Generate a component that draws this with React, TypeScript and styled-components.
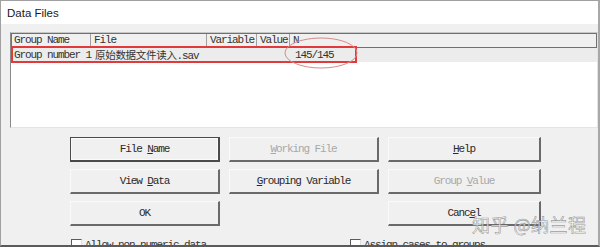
import styled, { createGlobalStyle } from 'styled-components'

const GlobalStyle = createGlobalStyle`
    body {
        margin: 0;
        background: #ffffff;
    }
    * {
        box-sizing: border-box;
    }
`;

const mono = `"Liberation Mono", "Noto Sans CJK SC", monospace`;

const Window = styled.div`
    position: relative;
    width: 600px;
    height: 247px;
    overflow: hidden;
    display: flex;
    flex-direction: column;
    background: #f0f0f0;
    border: 1px solid #a0a0a0;
    border-right: 2px solid #a8a8a8;
    border-bottom: 2px solid #5a5a5a;
`;

const TitleBar = styled.div`
    height: 23px;
    flex: none;
    background: #ffffff;
    display: flex;
    align-items: center;
    padding-left: 6px;
    font-family: "Liberation Sans", Arial, sans-serif;
    font-size: 11.5px;
    color: #1a1a1a;
`;

const Body = styled.div`
    flex: 1;
    padding: 8px 0 0 9px;
    font-family: ${mono};
    font-size: 11px;
    letter-spacing: -1.1px;
    color: #333333;
`;

const ListBox = styled.div`
    height: 96px;
    background: #ffffff;
    border-left: 1px solid #8a8a8a;
    border-top: 1px solid #c8c8c8;
    border-right: 1px solid #e4e4e4;
    border-bottom: 1px solid #e4e4e4;
`;

const Row = styled.div<{ $head?: boolean }>`
    display: grid;
    grid-template-columns: 79px 116px 50px 33px 1fr;
    height: ${p => (p.$head ? 15 : 14)}px;
    background: ${p => (p.$head ? '#f0f0f0' : '#ececec')};
    border: ${p => (p.$head ? '1px solid #707070' : 'none')};
    line-height: ${p => (p.$head ? 13 : 14)}px;
`;

const Cell = styled.div<{ $head?: boolean; $pad?: number }>`
    padding-left: ${p => p.$pad ?? 3}px;
    white-space: nowrap;
    border-right: ${p => (p.$head ? '1px solid #a0a0a0' : 'none')};
    &:last-child {
        border-right: none;
    }
`;

const Cjk = styled.span`
    letter-spacing: -0.3px;
    font-family: "Noto Sans CJK SC", sans-serif;
    font-size: 10.5px;
`;

const ButtonGrid = styled.div`
    display: grid;
    grid-template-columns: 150px 150px 153px;
    grid-auto-rows: 25px;
    column-gap: 9px;
    row-gap: 7px;
    margin: 9px 0 0 60px;
`;

const Button = styled.div<{ $default?: boolean; $disabled?: boolean }>`
    display: flex;
    align-items: center;
    justify-content: center;
    background: #f0f0f0;
    color: ${p => (p.$disabled ? '#a8a8a8' : '#2a2a2a')};
    border-top: 1px solid ${p => (p.$default ? '#4a4a4a' : '#fafafa')};
    border-left: 1px solid ${p => (p.$default ? '#4a4a4a' : '#fafafa')};
    border-right: ${p => (p.$default ? '2px solid #4a4a4a' : '2px solid #6a6a6a')};
    border-bottom: ${p => (p.$default ? '2px solid #4a4a4a' : '2px solid #6a6a6a')};
    box-shadow: ${p => (p.$default ? 'inset 0 0 0 1px #fafafa' : 'none')};
    u {
        text-decoration: underline;
        text-underline-offset: 1px;
    }
`;

const CheckRow = styled.div`
    display: flex;
    margin: 13px 0 0 61px;
`;

const CheckItem = styled.label`
    display: flex;
    align-items: flex-start;
    gap: 3px;
    width: 279px;
    flex: none;
`;

const Box = styled.span`
    width: 11px;
    height: 11px;
    flex: none;
    background: #ffffff;
    border-top: 1px solid #5a5a5a;
    border-left: 1px solid #5a5a5a;
    border-right: 1px solid #e0e0e0;
    border-bottom: 1px solid #e0e0e0;
`;

const CheckText = styled.span`
    line-height: 11px;
    margin-top: 1px;
`;

const RedMark = styled.div`
    position: absolute;
    left: 10px;
    top: 45px;
    width: 346px;
    height: 17px;
    border: 2px solid #e23a3a;
    pointer-events: none;
`;

const Ellipse = styled.svg`
    position: absolute;
    left: 282px;
    top: 35px;
    pointer-events: none;
`;

const Watermark = styled.div`
    position: absolute;
    left: 471px;
    top: 210px;
    font-family: "Noto Sans CJK SC", sans-serif;
    font-size: 18px;
    color: rgba(255, 255, 255, 0.8);
    -webkit-text-stroke: 0.6px rgba(100, 100, 100, 0.65);
    letter-spacing: 0.5px;
    white-space: nowrap;
`;

function App() {
    return (
        <>
            <GlobalStyle />
            <Window>
                <TitleBar>Data Files</TitleBar>
                <Body>
                    <ListBox>
                        <Row $head>
                            <Cell $head $pad={2}>Group Name</Cell>
                            <Cell $head>File</Cell>
                            <Cell $head>Variable</Cell>
                            <Cell $head>Value</Cell>
                            <Cell $head>N</Cell>
                        </Row>
                        <Row>
                            <Cell>Group number 1</Cell>
                            <Cell $pad={5}><Cjk>原始数据文件读入</Cjk>.sav</Cell>
                            <Cell />
                            <Cell />
                            <Cell $pad={6}>145/145</Cell>
                        </Row>
                    </ListBox>
                    <ButtonGrid>
                        <Button $default>File&nbsp;<u>N</u>ame</Button>
                        <Button $disabled><u>W</u>orking File</Button>
                        <Button><u>H</u>elp</Button>
                        <Button>View&nbsp;<u>D</u>ata</Button>
                        <Button><u>G</u>rouping Variable</Button>
                        <Button $disabled>Group&nbsp;<u>V</u>alue</Button>
                        <Button>OK</Button>
                        <div />
                        <Button>Canc<u>e</u>l</Button>
                    </ButtonGrid>
                    <CheckRow>
                        <CheckItem><Box /><CheckText>Allow non-numeric data</CheckText></CheckItem>
                        <CheckItem><Box /><CheckText>Assign cases to groups</CheckText></CheckItem>
                    </CheckRow>
                </Body>
                <RedMark />
                <Ellipse width="78" height="34" viewBox="0 0 78 34">
                    <ellipse cx="38" cy="17" rx="36" ry="15" fill="none" stroke="#d98a8a" strokeWidth="1" />
                </Ellipse>
                <Watermark>知乎 @纳兰程</Watermark>
            </Window>
        </>
    )
}

export default App
